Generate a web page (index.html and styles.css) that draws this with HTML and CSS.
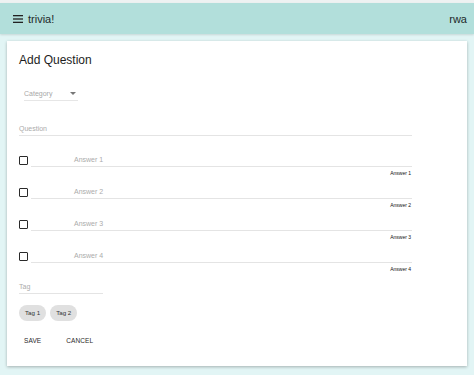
FILE: index.html
```html
<!DOCTYPE html>
<html>
<head>
<meta charset="utf-8">
<link rel="stylesheet" href="styles.css">
</head>
<body>
<div class="top">
  <header class="appbar">
    <div class="brand">
      <svg class="menu" width="10" height="8" viewBox="0 0 10 8"><rect x="0" y="0" width="10" height="1.3" fill="#222"/><rect x="0" y="3.35" width="10" height="1.3" fill="#222"/><rect x="0" y="6.7" width="10" height="1.3" fill="#222"/></svg>
      <span class="title">trivia!</span>
    </div>
    <span class="user">rwa</span>
  </header>
</div>
<main class="main">
  <section class="card">
    <h1 class="heading">Add Question</h1>
    <div class="select">
      <span>Category</span>
      <svg width="6" height="3" viewBox="0 0 6 3"><path d="M0 0h6L3 3z" fill="#777"/></svg>
    </div>
    <div class="field question">Question</div>
    <div class="answers">
      <div class="answer">
        <div class="row"><span class="check"></span><div class="field ans">Answer 1</div></div>
        <div class="helper">Answer 1</div>
      </div>
      <div class="answer">
        <div class="row"><span class="check"></span><div class="field ans">Answer 2</div></div>
        <div class="helper">Answer 2</div>
      </div>
      <div class="answer">
        <div class="row"><span class="check"></span><div class="field ans">Answer 3</div></div>
        <div class="helper">Answer 3</div>
      </div>
      <div class="answer">
        <div class="row"><span class="check"></span><div class="field ans">Answer 4</div></div>
        <div class="helper">Answer 4</div>
      </div>
    </div>
    <div class="field tag">Tag</div>
    <div class="chips">
      <span class="chip">Tag 1</span>
      <span class="chip">Tag 2</span>
    </div>
    <div class="actions">
      <span class="btn">SAVE</span>
      <span class="btn">CANCEL</span>
    </div>
  </section>
</main>
</body>
</html>
```
FILE: styles.css
```css
html, body {
  margin: 0;
  padding: 0;
}
body {
  width: 474px;
  height: 375px;
  background: #e2f5f5;
  font-family: "Liberation Sans", Arial, sans-serif;
  overflow: hidden;
}
.top {
  padding-top: 3px;
  background: #eef2f2;
}
.appbar {
  height: 31px;
  background: #b2dfdb;
  display: flex;
  align-items: center;
  justify-content: space-between;
  padding: 0 7px 0 13px;
  box-shadow: 0 1px 2px rgba(0,0,0,0.12);
}
.brand {
  display: flex;
  align-items: center;
  gap: 5px;
}
.menu { display: block; }
.title, .user {
  font-size: 11px;
  color: #1e2a2a;
}
.main {
  padding: 7px 7px 0 7px;
}
.card {
  height: 325px;
  box-sizing: border-box;
  background: #fff;
  padding: 12px 12px;
  box-shadow: 0 1px 3px rgba(0,0,0,0.28);
}
.heading {
  margin: 0;
  font-size: 12px;
  line-height: 14px;
  font-weight: normal;
  color: #1d1d1d;
}
.select {
  margin: 19px 0 0 5px;
  width: 54px;
  height: 14px;
  border-bottom: 1px solid #e6e6e6;
  display: flex;
  align-items: center;
  justify-content: space-between;
  font-size: 7px;
  color: #a8a8a8;
}
.select svg { margin-right: 2px; }
.field {
  font-size: 7px;
  line-height: 13px;
  height: 13px;
  color: #ababab;
  border-bottom: 1px solid #e4e4e4;
}
.question {
  margin-top: 21px;
  width: 393px;
}
.answers {
  margin-top: 17px;
  display: flex;
  flex-direction: column;
  gap: 9px;
  width: 393px;
}
.row {
  display: flex;
  align-items: center;
}
.check {
  width: 7px;
  height: 7px;
  border: 1.6px solid #2a2a2a;
  border-radius: 1px;
  margin-top: 1px;
  flex: none;
}
.ans {
  flex: 1;
  margin-left: 3px;
  padding-left: 43px;
}
.helper {
  margin-top: 3px;
  font-size: 5px;
  line-height: 6px;
  text-align: right;
  color: #111;
  padding-right: 1px;
}
.tag {
  margin-top: 8px;
  width: 84px;
}
.chips {
  margin-top: 11px;
  display: flex;
  gap: 4px;
}
.chip {
  height: 16px;
  line-height: 16px;
  padding: 0 6px;
  border-radius: 8px;
  background: #e0e0e0;
  font-size: 6.2px;
  color: #333;
}
.actions {
  margin-top: 12px;
  display: flex;
  gap: 15px;
}
.btn {
  height: 16px;
  line-height: 16px;
  padding: 0 5px;
  font-size: 6.5px;
  color: #2a2a2a;
  letter-spacing: 0.1px;
}
```
